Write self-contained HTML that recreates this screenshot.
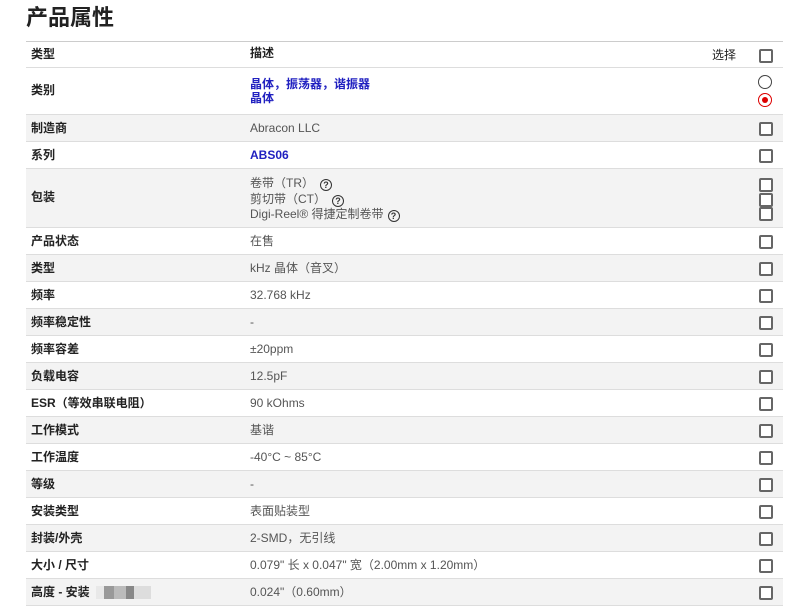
<!DOCTYPE html>
<html><head><meta charset="utf-8"><style>
body{margin:0;background:#fff;font-family:"Liberation Sans","Noto Sans CJK SC",sans-serif;color:#333;width:794px;height:615px;overflow:hidden;position:relative}
h1{position:absolute;left:26px;top:2px;margin:0;font-size:22px;line-height:32px;font-weight:bold;color:#222}
.t{position:absolute;left:26px;top:41px;width:757px;border-top:1px solid #ccc}
.r{position:relative;border-bottom:1px solid #ddd;box-sizing:border-box;font-size:12px;line-height:15px}
.r.g{background:#f3f3f3}
.a{position:absolute;left:5px;font-weight:bold;color:#222;line-height:15px}
.b{position:absolute;left:224px;color:#555;line-height:15px}
.cb{position:absolute;left:733px;width:10px;height:10px;border:2px solid #666;border-radius:2px;background:#fff}
.q{display:inline-block;width:10px;height:10px;border:1.3px solid #333;border-radius:50%;font-size:9px;line-height:10px;text-align:center;font-weight:bold;color:#333;margin-left:6px;vertical-align:-1px}
.blue{color:#2020c0;font-weight:bold}
</style></head><body>
<h1>产品属性</h1>
<div class="t">
<div class="r" style="height:26px"><span class="a" style="top:5px">类型</span><span class="b" style="top:4px;color:#222;font-weight:bold">描述</span><span style="position:absolute;left:686px;top:6px;color:#222">选择</span><span class="cb" style="top:7px"></span></div>
<div class="r" style="height:47px"><span class="a" style="top:15px">类别</span><span class="b blue" style="top:9px;line-height:14px">晶体，振荡器，谐振器<br>晶体</span>
<span style="position:absolute;left:732px;top:7px;width:12px;height:12px;border:1.3px solid #444;border-radius:50%"></span>
<span style="position:absolute;left:732px;top:25px;width:12px;height:12px;border:1.5px solid #d00;border-radius:50%;box-sizing:content-box"><span style="position:absolute;left:3px;top:3px;width:6px;height:6px;background:#d00;border-radius:50%"></span></span></div>
<div class="r g" style="height:27px"><span class="a" style="top:6px">制造商</span><span class="b" style="top:6px">Abracon LLC</span><span class="cb" style="top:7px"></span></div>
<div class="r" style="height:27px"><span class="a" style="top:6px">系列</span><span class="b blue" style="top:6px">ABS06</span><span class="cb" style="top:7px"></span></div>
<div class="r g" style="height:59px"><span class="a" style="top:21px">包装</span><span class="b" style="top:7px;line-height:15.5px">卷带（TR）<span class="q">?</span><br>剪切带（CT）<span class="q">?</span><br>Digi-Reel® 得捷定制卷带<span class="q" style="margin-left:4px">?</span></span><span class="cb" style="top:9px"></span><span class="cb" style="top:24px"></span><span class="cb" style="top:38px"></span></div>
<div class="r" style="height:27px"><span class="a" style="top:6px">产品状态</span><span class="b" style="top:6px">在售</span><span class="cb" style="top:7px"></span></div>
<div class="r g" style="height:27px"><span class="a" style="top:6px">类型</span><span class="b" style="top:6px">kHz 晶体（音叉）</span><span class="cb" style="top:7px"></span></div>
<div class="r" style="height:27px"><span class="a" style="top:6px">频率</span><span class="b" style="top:6px">32.768 kHz</span><span class="cb" style="top:7px"></span></div>
<div class="r g" style="height:27px"><span class="a" style="top:6px">频率稳定性</span><span class="b" style="top:6px">-</span><span class="cb" style="top:7px"></span></div>
<div class="r" style="height:27px"><span class="a" style="top:6px">频率容差</span><span class="b" style="top:6px">±20ppm</span><span class="cb" style="top:7px"></span></div>
<div class="r g" style="height:27px"><span class="a" style="top:6px">负载电容</span><span class="b" style="top:6px">12.5pF</span><span class="cb" style="top:7px"></span></div>
<div class="r" style="height:27px"><span class="a" style="top:6px">ESR（等效串联电阻）</span><span class="b" style="top:6px">90 kOhms</span><span class="cb" style="top:7px"></span></div>
<div class="r g" style="height:27px"><span class="a" style="top:6px">工作模式</span><span class="b" style="top:6px">基谐</span><span class="cb" style="top:7px"></span></div>
<div class="r" style="height:27px"><span class="a" style="top:6px">工作温度</span><span class="b" style="top:6px">-40°C ~ 85°C</span><span class="cb" style="top:7px"></span></div>
<div class="r g" style="height:27px"><span class="a" style="top:6px">等级</span><span class="b" style="top:6px">-</span><span class="cb" style="top:7px"></span></div>
<div class="r" style="height:27px"><span class="a" style="top:6px">安装类型</span><span class="b" style="top:6px">表面贴装型</span><span class="cb" style="top:7px"></span></div>
<div class="r g" style="height:27px"><span class="a" style="top:6px">封装/外壳</span><span class="b" style="top:6px">2-SMD，无引线</span><span class="cb" style="top:7px"></span></div>
<div class="r" style="height:27px"><span class="a" style="top:6px">大小 / 尺寸</span><span class="b" style="top:6px">0.079" 长 x 0.047" 宽（2.00mm x 1.20mm）</span><span class="cb" style="top:7px"></span></div>
<div class="r g" style="height:27px"><span class="a" style="top:6px">高度 - 安装</span><span style="position:absolute;left:70px;top:7px;width:55px;height:13px;background:linear-gradient(90deg,#e8e8e8 0 8px,#999 8px 18px,#bbb 18px 30px,#888 30px 38px,#ddd 38px)"></span><span class="b" style="top:6px">0.024"（0.60mm）</span><span class="cb" style="top:7px"></span></div>
</div>
</body></html>
